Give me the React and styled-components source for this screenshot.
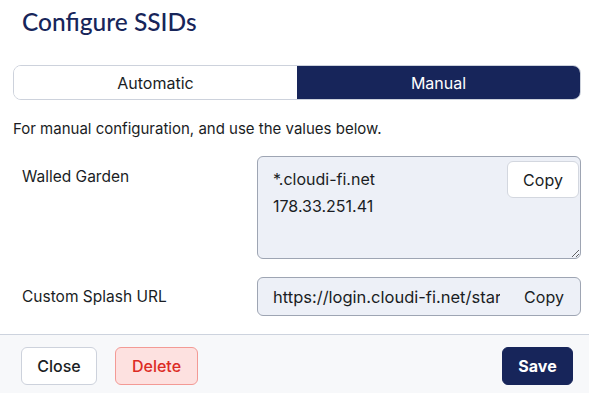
import { useState } from "react";
import styled, { createGlobalStyle } from "styled-components";

const GlobalStyle = createGlobalStyle`
  html, body {
    margin: 0;
    padding: 0;
    background: #ffffff;
  }
  body {
    font-family: "Inter", "Liberation Sans", sans-serif;
    color: #1a1d24;
  }
  * {
    box-sizing: border-box;
  }
`;

const WALLED = "*.cloudi-fi.net\n178.33.251.41";
const SPLASH = "https://login.cloudi-fi.net/start/";

function App() {
  const [mode, setMode] = useState("manual");

  return (
    <>
      <GlobalStyle />
      <StyledModal>
        <Body>
          <Title>Configure SSIDs</Title>
          <Segmented>
            <Segment $active={mode === "automatic"} onClick={() => setMode("automatic")}>
              Automatic
            </Segment>
            <Segment $active={mode === "manual"} onClick={() => setMode("manual")}>
              Manual
            </Segment>
          </Segmented>
          <Hint>For manual configuration, and use the values below.</Hint>
          <Field>
            <Label $top>Walled Garden</Label>
            <AreaWrap>
              <Area readOnly value={WALLED} />
              <CopyButton $boxed>Copy</CopyButton>
            </AreaWrap>
          </Field>
          <Field>
            <Label>Custom Splash URL</Label>
            <InputWrap>
              <UrlInput readOnly value={SPLASH} />
              <CopyButton>Copy</CopyButton>
            </InputWrap>
          </Field>
        </Body>
        <Footer>
          <Button>Close</Button>
          <Button $variant="danger">Delete</Button>
          <Spacer />
          <Button $variant="primary">Save</Button>
        </Footer>
      </StyledModal>
    </>
  );
}

const StyledModal = styled.div`
  width: 589px;
  height: 393px;
  display: flex;
  flex-direction: column;
  overflow: hidden;
`;

const Body = styled.div`
  flex: 1;
  display: flex;
  flex-direction: column;
  padding: 6px 8px 0 13px;
`;

const Title = styled.h1`
  margin: 0 0 0 9px;
  font-family: "Lato", "Open Sans", sans-serif;
  font-weight: 500;
  font-size: 24.5px;
  line-height: 32px;
  color: #17255a;
`;

const Segmented = styled.div`
  margin-top: 27px;
  display: grid;
  grid-template-columns: 1fr 1fr;
  height: 35px;
  border: 1px solid #cdd2dc;
  border-radius: 8px;
  overflow: hidden;
`;

const Segment = styled.button`
  border: none;
  margin: 0;
  font-family: "Inter", "Liberation Sans", sans-serif;
  font-size: 16px;
  cursor: pointer;
  background: ${(p) => (p.$active ? "#17255a" : "#ffffff")};
  color: ${(p) => (p.$active ? "#ffffff" : "#1a1d24")};
`;

const Hint = styled.p`
  margin: 17px 0 0;
  font-size: 15px;
  line-height: 24px;
`;

const Field = styled.div`
  display: grid;
  grid-template-columns: 244px 1fr;
  align-items: center;
  margin-top: 15px;
  & + & {
    margin-top: 18px;
  }
`;

const Label = styled.div`
  padding-left: 9px;
  font-size: 15.5px;
  line-height: 20px;
  align-self: ${(p) => (p.$top ? "start" : "center")};
  padding-top: ${(p) => (p.$top ? "11px" : "0")};
`;

const AreaWrap = styled.div`
  position: relative;
  height: 103px;
`;

const Area = styled.textarea`
  width: 100%;
  height: 100%;
  margin: 0;
  display: block;
  resize: vertical;
  padding: 9px 15px;
  font-family: "Inter", "Liberation Sans", sans-serif;
  font-size: 16px;
  line-height: 27px;
  color: #1a1d24;
  background: #edf0f7;
  border: 1px solid #9ea5b3;
  border-radius: 6px;
  outline: none;
`;

const InputWrap = styled.div`
  display: flex;
  align-items: center;
  height: 39px;
  background: #edf0f7;
  border: 1px solid #9ea5b3;
  border-radius: 6px;
  padding-left: 15px;
  overflow: hidden;
`;

const UrlInput = styled.input`
  flex: 1;
  min-width: 0;
  margin-right: 8px;
  border: none;
  background: transparent;
  padding: 0;
  font-family: "Inter", "Liberation Sans", sans-serif;
  font-size: 16.5px;
  color: #1a1d24;
  outline: none;
`;

const CopyButton = styled.button`
  font-family: "Inter", "Liberation Sans", sans-serif;
  font-size: 16px;
  font-weight: 400;
  color: #1a1d24;
  cursor: pointer;
  width: 72px;
  height: 37px;
  flex: none;
  border-radius: 6px;
  border: ${(p) => (p.$boxed ? "1px solid #d3d7df" : "none")};
  background: ${(p) => (p.$boxed ? "#ffffff" : "transparent")};
  ${(p) =>
    p.$boxed &&
    `
    position: absolute;
    top: 5px;
    right: 2px;
  `}
`;

const Footer = styled.div`
  height: 59px;
  flex: none;
  display: flex;
  align-items: flex-start;
  gap: 18px;
  padding: 12px 16px 0 21px;
  background: #f7f8fa;
  border-top: 1px solid #cdd3de;
`;

const Spacer = styled.div`
  flex: 1;
`;

const variants = {
  default: { bg: "#ffffff", border: "#cdd2dc", color: "#1a1d24", width: "76px" },
  danger: { bg: "#fde1e0", border: "#f39a95", color: "#dc2b24", width: "83px" },
  primary: { bg: "#17255a", border: "#17255a", color: "#ffffff", width: "71px" },
};

const Button = styled.button`
  height: 38px;
  padding: 0 12px;
  border-radius: 6px;
  font-family: "Inter", "Liberation Sans", sans-serif;
  font-size: 16px;
  font-weight: ${(p) => (p.$variant === "primary" ? 700 : 500)};
  cursor: pointer;
  background: ${(p) => variants[p.$variant || "default"].bg};
  border: 1px solid ${(p) => variants[p.$variant || "default"].border};
  color: ${(p) => variants[p.$variant || "default"].color};
  min-width: ${(p) => variants[p.$variant || "default"].width};
`;

export default App;
